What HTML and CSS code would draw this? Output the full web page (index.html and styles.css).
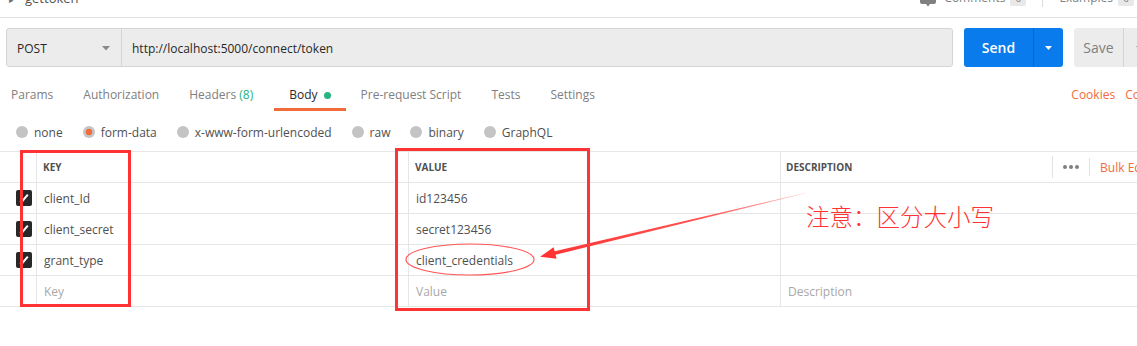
FILE: index.html
```html
<!DOCTYPE html>
<html>
<head>
<meta charset="utf-8">
<link rel="stylesheet" href="styles.css">
</head>
<body>
<div class="page">
  <div class="topbar">
    <div class="title"><span class="title-caret">▸</span><span class="title-text">gettoken</span></div>
    <div class="top-actions">
      <svg class="comment-icon" width="16" height="14" viewBox="0 0 16 14"><path d="M2 0 H14 A2 2 0 0 1 16 2 V9 A2 2 0 0 1 14 11 H10 L8 13.5 L6 11 H2 A2 2 0 0 1 0 9 V2 A2 2 0 0 1 2 0 Z" fill="#808080"/></svg>
      <span class="top-link">Comments</span><span class="badge">0</span>
      <span class="top-sep"></span>
      <span class="top-link">Examples</span><span class="badge">0</span>
    </div>
  </div>

  <div class="request-row">
    <div class="url-group">
      <div class="method"><span>POST</span><svg width="8" height="5" viewBox="0 0 8 5"><path d="M0 0 H8 L4 4.5 Z" fill="#8a8a8a"/></svg></div>
      <div class="url">http://localhost:5000/connect/token</div>
    </div>
    <div class="send">
      <span class="send-main">Send</span>
      <span class="send-drop"><svg width="7" height="4" viewBox="0 0 7 4"><path d="M0 0 H7 L3.5 4 Z" fill="#fff"/></svg></span>
    </div>
    <div class="save">
      <span class="save-main">Save</span>
      <span class="save-drop"><svg width="7" height="4" viewBox="0 0 7 4"><path d="M0 0 H7 L3.5 4 Z" fill="#808080"/></svg></span>
    </div>
  </div>

  <div class="tabs">
    <span class="tab">Params</span>
    <span class="tab">Authorization</span>
    <span class="tab">Headers <span class="green count">(8)</span></span>
    <span class="tab active">Body<span class="green-dot"></span></span>
    <span class="tab">Pre-request Script</span>
    <span class="tab">Tests</span>
    <span class="tab">Settings</span>
    <span class="tabs-right"><span>Cookies</span><span>Code</span></span>
  </div>

  <div class="radios">
    <span class="radio"><span class="radio-dot"></span>none</span>
    <span class="radio"><span class="radio-dot on"></span>form-data</span>
    <span class="radio"><span class="radio-dot"></span>x-www-form-urlencoded</span>
    <span class="radio"><span class="radio-dot"></span>raw</span>
    <span class="radio"><span class="radio-dot"></span>binary</span>
    <span class="radio"><span class="radio-dot"></span>GraphQL</span>
  </div>

  <div class="table">
    <div class="row header">
      <div class="cell cell-check"></div>
      <div class="cell cell-key">KEY</div>
      <div class="cell cell-value">VALUE</div>
      <div class="cell cell-desc">
        <span>DESCRIPTION</span>
        <span class="hdr-tools">
          <span class="hdr-sep"></span>
          <svg class="dots" width="16" height="4" viewBox="0 0 16 4"><circle cx="2" cy="2" r="2" fill="#808080"/><circle cx="8" cy="2" r="2" fill="#808080"/><circle cx="14" cy="2" r="2" fill="#808080"/></svg>
          <span class="hdr-sep short"></span>
          <span class="bulk">Bulk Edit</span>
        </span>
      </div>
    </div>
    <div class="row">
      <div class="cell cell-check"><span class="checkbox"><svg width="16" height="16" viewBox="0 0 16 16"><path d="M4.2 10.6 L5.6 12 L11.8 4.6" stroke="#fff" stroke-width="2" fill="none"/></svg></span></div>
      <div class="cell cell-key">client_Id</div>
      <div class="cell cell-value">id123456</div>
      <div class="cell cell-desc"></div>
    </div>
    <div class="row">
      <div class="cell cell-check"><span class="checkbox"><svg width="16" height="16" viewBox="0 0 16 16"><path d="M4.2 10.6 L5.6 12 L11.8 4.6" stroke="#fff" stroke-width="2" fill="none"/></svg></span></div>
      <div class="cell cell-key">client_secret</div>
      <div class="cell cell-value">secret123456</div>
      <div class="cell cell-desc"></div>
    </div>
    <div class="row">
      <div class="cell cell-check"><span class="checkbox"><svg width="16" height="16" viewBox="0 0 16 16"><path d="M4.2 10.6 L5.6 12 L11.8 4.6" stroke="#fff" stroke-width="2" fill="none"/></svg></span></div>
      <div class="cell cell-key">grant_type</div>
      <div class="cell cell-value">client_credentials</div>
      <div class="cell cell-desc"></div>
    </div>
    <div class="row">
      <div class="cell cell-check"></div>
      <div class="cell cell-key placeholder">Key</div>
      <div class="cell cell-value placeholder">Value</div>
      <div class="cell cell-desc placeholder">Description</div>
    </div>
  </div>
</div>

<svg class="annot" width="1137" height="346" viewBox="0 0 1137 346">
  <defs>
    <linearGradient id="fade" x1="805" y1="193" x2="545" y2="256" gradientUnits="userSpaceOnUse">
      <stop offset="0" stop-color="#ffb3b3"/>
      <stop offset="0.4" stop-color="#ff5555"/>
      <stop offset="1" stop-color="#f33"/>
    </linearGradient>
  </defs>
  <rect x="21.5" y="151.5" width="108" height="154" fill="none" stroke="#f33" stroke-width="3"/>
  <rect x="396.5" y="149.5" width="192" height="160" fill="none" stroke="#f33" stroke-width="3"/>
  <ellipse cx="470" cy="259.5" rx="64" ry="15.5" fill="none" stroke="#f55" stroke-width="1.2"/>
  <polygon points="805,192.9 805,193.3 553.4,255.3 552.6,251.7" fill="url(#fade)"/>
  <polygon points="540,256.8 553.6,247.2 556.6,258.8" fill="#f33"/>
</svg>
<div class="annot-text">注意：区分大小写</div>
</body>
</html>
```

FILE: styles.css
```css
html, body {
  margin: 0;
  padding: 0;
}
body {
  position: relative;
  width: 1137px;
  height: 346px;
  overflow: hidden;
  background: #fff;
  font-family: "Open Sans", "Liberation Sans", sans-serif;
  font-size: 12px;
  color: #505050;
}
.page {
  width: 1137px;
  overflow: hidden;
}

/* top bar */
.topbar {
  display: flex;
  justify-content: space-between;
  align-items: flex-start;
  height: 17px;
  overflow: hidden;
  border-bottom: 1px solid #e3e3e3;
}
.title {
  display: flex;
  align-items: baseline;
  margin-top: -12px;
  line-height: 20px;
  padding-left: 9px;
}
.title-caret {
  font-size: 9px;
  color: #707070;
  width: 16px;
}
.title-text {
  font-size: 13px;
  color: #505050;
}
.top-actions {
  display: flex;
  align-items: flex-start;
  padding-right: 3px;
}
.comment-icon {
  margin-top: -7px;
  margin-right: 8px;
}
.top-link {
  font-size: 12px;
  line-height: 20px;
  margin-top: -12px;
  color: #808080;
}
.badge {
  width: 16px;
  height: 16px;
  margin-top: -10px;
  margin-left: 5px;
  background: #e8e8e8;
  border-radius: 2px;
  font-size: 10px;
  line-height: 16px;
  text-align: center;
  color: #808080;
}
.top-sep {
  width: 1px;
  height: 7px;
  background: #dcdcdc;
  margin: 0 16px;
}

/* request row */
.request-row {
  display: flex;
  gap: 11px;
  margin-top: 10px;
  padding-left: 6px;
  height: 39px;
}
.url-group {
  flex: 0 0 947px;
  display: flex;
  box-sizing: border-box;
  height: 39px;
  background: #ececec;
  border: 1px solid #d4d4d4;
  border-radius: 3px;
}
.method {
  flex: 0 0 115px;
  box-sizing: border-box;
  display: flex;
  align-items: center;
  justify-content: space-between;
  padding: 1px 11px 0 10px;
  border-right: 1px solid #d4d4d4;
  color: #282828;
  font-size: 12px;
}
.url {
  display: flex;
  align-items: center;
  padding: 1px 0 0 10px;
  color: #282828;
  font-size: 12px;
}
.send {
  flex: 0 0 99px;
  display: flex;
  height: 39px;
  background: #097bed;
  border-radius: 3px;
  color: #fff;
}
.send-main {
  flex: 0 0 69px;
  display: flex;
  align-items: center;
  justify-content: center;
  font-size: 14px;
  font-weight: 600;
}
.send-drop {
  flex: 1;
  display: flex;
  align-items: center;
  justify-content: center;
  border-left: 1px solid #0868cf;
}
.save {
  flex: 0 0 80px;
  display: flex;
  height: 39px;
  background: #ececec;
  border-radius: 3px;
}
.save-main {
  flex: 0 0 49px;
  display: flex;
  align-items: center;
  justify-content: center;
  font-size: 14px;
  color: #808080;
}
.save-drop {
  flex: 1;
  display: flex;
  align-items: center;
  justify-content: center;
  border-left: 1px solid #d4d4d4;
}

/* tabs */
.tabs {
  display: flex;
  margin-top: 13px;
  height: 31px;
}
.tab {
  flex-shrink: 0;
  padding: 2px 15px 0;
  line-height: 26px;
  border-bottom: 3px solid transparent;
  color: #808080;
  white-space: nowrap;
}
.tab:first-child {
  padding-left: 11px;
}
.tab.active {
  display: flex;
  align-items: center;
  gap: 6px;
  color: #282828;
  border-bottom-color: #f26b3a;
}
.green {
  color: #26b47f;
}
.count {
  margin-right: 6px;
}
.green-dot {
  width: 7px;
  height: 7px;
  border-radius: 50%;
  background: #26b47f;
}
.tabs-right {
  flex-shrink: 0;
  display: flex;
  gap: 10px;
  margin-left: auto;
  margin-right: -17px;
  padding-top: 2px;
  line-height: 26px;
  color: #f26b3a;
}

/* radios */
.radios {
  display: flex;
  align-items: center;
  gap: 20px;
  box-sizing: border-box;
  height: 40px;
  padding: 2px 0 0 16px;
}
.radio {
  display: flex;
  align-items: center;
  gap: 6px;
  color: #505050;
}
.radio-dot {
  width: 12px;
  height: 12px;
  border-radius: 50%;
  background: #c4c4c4;
}
.radio-dot.on {
  background: radial-gradient(circle, #f26b3a 0 3px, #c4c4c4 3.6px);
}

/* table */
.table {
  width: 1160px;
  border-top: 1px solid #e6e6e6;
}
.row {
  display: flex;
  box-sizing: border-box;
  height: 31px;
  border-bottom: 1px solid #e6e6e6;
}
.cell {
  display: flex;
  align-items: center;
  box-sizing: border-box;
  padding-left: 7px;
  color: #505050;
}
.cell-check {
  flex: 0 0 37px;
  padding-left: 16px;
  border-right: 1px solid #e6e6e6;
}
.cell-key,
.cell-value {
  flex: 0 0 372px;
  border-right: 1px solid #e6e6e6;
}
.cell-desc {
  flex: 1;
}
.header .cell {
  padding-left: 6px;
  font-size: 10px;
  font-weight: 700;
  color: #505050;
}
.header .cell-check {
  padding-left: 0;
}
.header .cell-desc {
  padding-left: 5px;
}
.placeholder {
  color: #a8a8a8;
}
.cell-desc.placeholder {
  padding-left: 7px;
}
.checkbox {
  display: block;
  width: 16px;
  height: 16px;
  border-radius: 2px;
  background: #282828;
}
.checkbox svg {
  display: block;
}
.hdr-tools {
  display: flex;
  align-items: center;
  margin-left: auto;
  padding-right: 11px;
}
.hdr-sep {
  width: 1px;
  height: 22px;
  background: #e3e3e3;
}
.hdr-sep.short {
  height: 18px;
}
.dots {
  margin: 0 10px;
}
.bulk {
  margin-left: 10px;
  font-size: 12px;
  font-weight: 400;
  color: #f26b3a;
}

/* annotations */
.annot {
  position: absolute;
  left: 0;
  top: 0;
  pointer-events: none;
}
.annot-text {
  position: absolute;
  left: 806px;
  top: 204px;
  font-family: "Noto Sans CJK SC", sans-serif;
  font-size: 23.5px;
  line-height: 24px;
  font-weight: 300;
  color: #f33;
  white-space: nowrap;
}
```
